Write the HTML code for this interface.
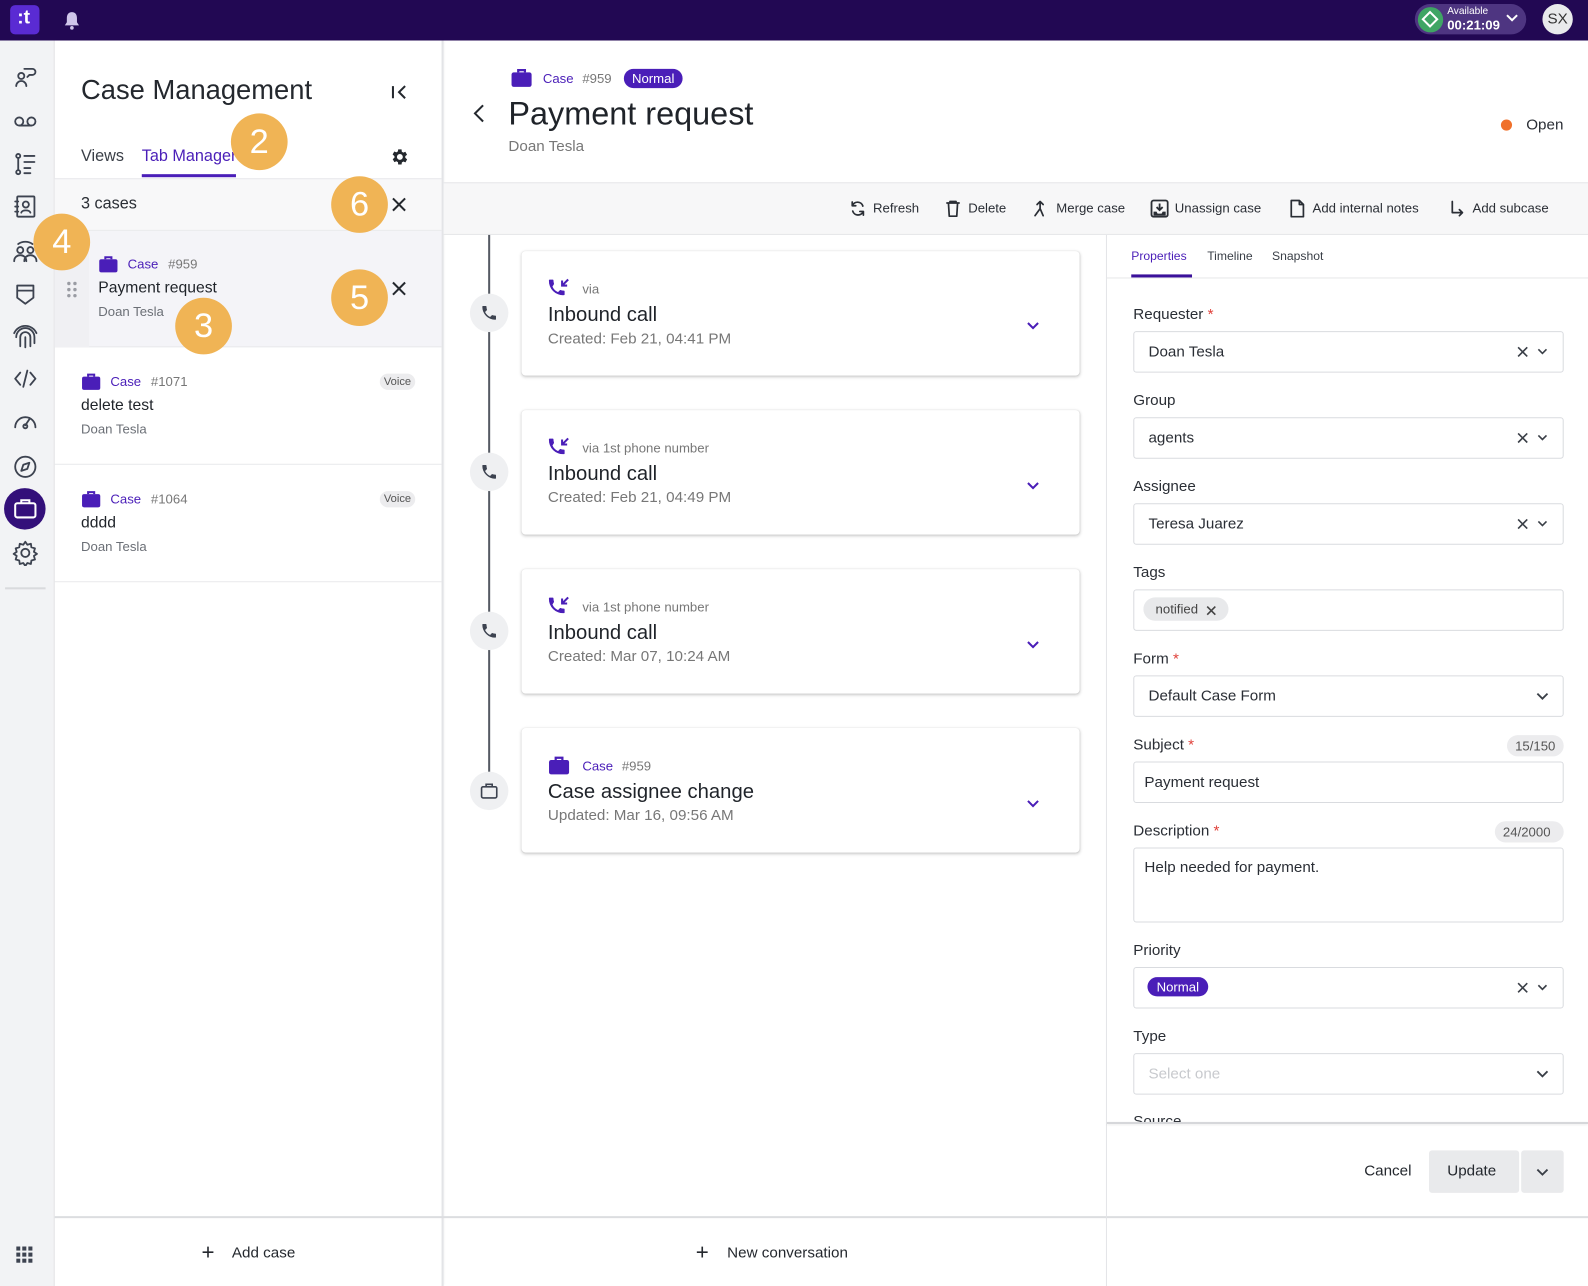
<!DOCTYPE html>
<html><head><meta charset="utf-8">
<style>
*{box-sizing:border-box;margin:0;padding:0}
html,body{width:1588px;height:1286px;overflow:hidden;background:#fff;font-family:"Liberation Sans",sans-serif;color:#1f2329}
#w{position:absolute;left:0;top:0;width:1568px;height:1270px;transform:scale(1.01276,1.0126);transform-origin:0 0;background:#fff}
.a{position:absolute}
.t{position:absolute;white-space:nowrap}
.ic{position:absolute;fill:none;stroke:#3d4350;stroke-width:1.8;stroke-linecap:round;stroke-linejoin:round}
.tb{position:absolute;fill:none;stroke:#2a2e35;stroke-width:1.7;stroke-linecap:round;stroke-linejoin:round}
.badge{position:absolute;width:56px;height:56px;border-radius:50%;background:#f0b455;color:#fff;font-size:34px;text-align:center;line-height:56px}
.card{position:absolute;left:515px;width:551px;height:123px;background:#fff;border-radius:4px;box-shadow:0 1px 3px rgba(0,0,0,.22),0 0 1px rgba(0,0,0,.08)}
.dot{position:absolute;left:464px;width:38px;height:38px;border-radius:50%;background:#eff0f2}
.lbl{position:absolute;left:1119px;font-size:15px;color:#2a2e35}
.req{color:#e0413a}
.inp{position:absolute;left:1119px;width:425px;height:41px;border:1.5px solid #d9dbdf;border-radius:3px;background:#fff}
.inp .v{position:absolute;left:14px;top:11px;font-size:15px;color:#2a2e35}
.cnt{position:absolute;right:24px;font-size:13px;color:#555;background:#ececee;border-radius:12px;padding:3px 8px}
</style></head><body><div id="w">

<!-- top bar -->
<div class="a" style="left:0;top:0;width:1568px;height:40px;background:#220853"></div>
<div class="a" style="left:10px;top:5px;width:29px;height:29px;border-radius:5px;background:#5a2bd3"></div>
<div class="t" style="left:17px;top:7px;color:#fff;font-size:19px;font-weight:bold">:t</div>
<svg class="a" style="left:62px;top:10px" width="18" height="20" viewBox="0 0 18 20"><path d="M9 2c-3.5 0-5 2.5-5 6v4l-2 3h14l-2-3V8c0-3.5-1.5-6-5-6z" fill="#cfc5ea"/><circle cx="9" cy="17.5" r="1.8" fill="#cfc5ea"/></svg>
<div class="a" style="left:1397px;top:4px;width:110px;height:30px;border-radius:15px;background:#4e3581"></div>
<div class="a" style="left:1400px;top:7px;width:25px;height:25px;border-radius:50%;background:#3fa564"></div>
<div class="a" style="left:1406px;top:13px;width:12px;height:12px;border:2px solid #fff;transform:rotate(45deg)"></div>
<div class="t" style="left:1429px;top:6px;color:#fff;font-size:10px">Available</div>
<div class="t" style="left:1429px;top:17px;color:#fff;font-size:13px;font-weight:bold">00:21:09</div>
<svg class="a" style="left:1487px;top:14px" width="12" height="8"><path d="M1 1l5 5 5-5" stroke="#fff" stroke-width="2" fill="none"/></svg>
<div class="a" style="left:1523px;top:4px;width:30px;height:30px;border-radius:50%;background:#e9eaec;color:#333;font-size:15px;text-align:center;line-height:30px">SX</div>

<!-- left rail -->
<div class="a" style="left:0;top:40px;width:54px;height:1230px;background:#f2f3f5;border-right:1px solid #e3e4e7"></div>
<svg class="ic" style="left:13px;top:64px" width="24" height="24" viewBox="0 0 24 24"><circle cx="8" cy="11" r="3"/><path d="M3 21c0-3 2.5-5 5-5s5 2 5 5"/><path d="M11 4h8a3 3 0 013 3v0a3 3 0 01-3 3h-3l-2 2"/></svg>
<svg class="ic" style="left:13px;top:110px" width="24" height="20" viewBox="0 0 24 20"><circle cx="6" cy="10" r="4"/><circle cx="18" cy="10" r="4"/><path d="M6 14h12"/></svg>
<svg class="ic" style="left:13px;top:150px" width="24" height="24" viewBox="0 0 24 24"><circle cx="5" cy="4" r="2"/><circle cx="5" cy="20" r="2"/><path d="M5 6v12M11 4h10M11 10h10M11 16h6M11 21h6"/></svg>
<svg class="ic" style="left:13px;top:192px" width="24" height="24" viewBox="0 0 24 24"><rect x="4" y="2" width="17" height="20" rx="1"/><circle cx="12.5" cy="10" r="3"/><path d="M8 18c1-3 8-3 9 0M2 7h3M2 12h3M2 17h3"/></svg>
<svg class="ic" style="left:12px;top:236px" width="26" height="24" viewBox="0 0 26 24"><circle cx="8" cy="11" r="3"/><circle cx="18" cy="11" r="3"/><path d="M2 22c0-4 3-6 6-6s6 2 6 6M12 22c0-4 3-6 6-6s6 2 6 6M6 5c4-3 10-3 14 0"/></svg>
<svg class="ic" style="left:14px;top:279px" width="22" height="24" viewBox="0 0 22 24"><path d="M3 3h16v12l-8 6-8-6z M3 8h16"/></svg>
<svg class="ic" style="left:12px;top:320px" width="26" height="26" viewBox="0 0 26 26"><path d="M4 13a9 9 0 0118 0v6M8 22v-9a5 5 0 0110 0v9M13 13v10M2 9a12 12 0 0122 0"/></svg>
<svg class="ic" style="left:13px;top:364px" width="24" height="20" viewBox="0 0 24 20"><path d="M7 4l-5 6 5 6M17 4l5 6-5 6M14 2l-4 16"/></svg>
<svg class="ic" style="left:12px;top:404px" width="26" height="22" viewBox="0 0 26 22"><path d="M3 18a10 10 0 0120 0M13 16l4-6"/><circle cx="13" cy="17" r="2"/></svg>
<svg class="ic" style="left:12px;top:448px" width="26" height="26" viewBox="0 0 26 26"><circle cx="13" cy="13" r="10"/><path d="M17 9l-2 6-6 2 2-6z"/></svg>
<div class="a" style="left:4px;top:482px;width:41px;height:41px;border-radius:50%;background:#33107a"></div>
<svg class="a" style="left:13px;top:490px" width="24" height="24" viewBox="0 0 24 24" fill="none" stroke="#fff" stroke-width="2"><rect x="2" y="7" width="20" height="14" rx="2"/><path d="M8 7V4h8v3"/></svg>
<svg class="ic" style="left:12px;top:533px" width="26" height="26" viewBox="0 0 26 26"><circle cx="13" cy="13" r="4"/><path d="M13 2l2 3 3.5-1 .5 3.5 3.5 1-1 3.5 3 2-3 2 1 3.5-3.5 1-.5 3.5-3.5-1-2 3-2-3-3.5 1-.5-3.5-3.5-1 1-3.5-3-2 3-2-1-3.5 3.5-1 .5-3.5 3.5 1z"/></svg>
<div class="a" style="left:5px;top:580px;width:40px;height:2px;background:#d9dadd"></div>
<svg class="a" style="left:16px;top:1231px" width="17" height="17" viewBox="0 0 17 17" fill="#3d4350"><rect x="0" y="0" width="4" height="4"/><rect x="6" y="0" width="4" height="4"/><rect x="12" y="0" width="4" height="4"/><rect x="0" y="6" width="4" height="4"/><rect x="6" y="6" width="4" height="4"/><rect x="12" y="6" width="4" height="4"/><rect x="0" y="12" width="4" height="4"/><rect x="6" y="12" width="4" height="4"/><rect x="12" y="12" width="4" height="4"/></svg>

<!-- left panel -->
<div class="a" style="left:54px;top:40px;width:384px;height:1230px;border-right:2px solid #e3e4e7;box-shadow:1px 0 2px rgba(0,0,0,.06)"></div>
<div class="t" style="left:80px;top:74px;font-size:27px;color:#24282e">Case Management</div>
<svg class="a" style="left:386px;top:83px" width="16" height="16" viewBox="0 0 16 16" fill="none" stroke="#24282e" stroke-width="2"><path d="M2 2v12M14 2L8 8l6 6"/></svg>
<div class="t" style="left:80px;top:146px;font-size:16px;color:#3a3f47">Views</div>
<div class="t" style="left:140px;top:146px;font-size:16px;color:#4a1eb8">Tab Manager</div>
<div class="a" style="left:140px;top:172px;width:93px;height:3px;background:#4a1eb8"></div>
<svg class="a" style="left:384px;top:145px" width="20" height="20" viewBox="0 0 24 24"><path fill="#24282e" d="M19.4 13a7.5 7.5 0 000-2l2.1-1.6-2-3.5-2.5 1a7 7 0 00-1.7-1L15 3h-4l-.4 2.6a7 7 0 00-1.7 1l-2.5-1-2 3.5L6.6 11a7.5 7.5 0 000 2l-2.1 1.6 2 3.5 2.5-1a7 7 0 001.7 1L11 21h4l.4-2.6a7 7 0 001.7-1l2.5 1 2-3.5zM13 15.5a3.5 3.5 0 110-7 3.5 3.5 0 010 7z"/></svg>
<div class="a" style="left:54px;top:176px;width:382px;height:52px;background:#f8f8f9;border-top:1px solid #e8e9eb;border-bottom:1px solid #e8e9eb"></div>
<div class="t" style="left:80px;top:193px;font-size:16px;color:#2a2e35">3 cases</div>
<svg class="a" style="left:387px;top:195px" width="14" height="14" fill="none" stroke="#24282e" stroke-width="2"><path d="M1 1l12 12M13 1L1 13"/></svg>
<div class="a" style="left:54px;top:228px;width:382px;height:115px;background:#f4f4f8;border-bottom:1px solid #e8e9eb"></div>
<div class="a" style="left:54px;top:228px;width:34px;height:115px;background:#f0f0f3"></div>
<svg class="a" style="left:66px;top:278px" width="10" height="16" fill="#9a9ca3"><circle cx="2" cy="2" r="1.7"/><circle cx="8" cy="2" r="1.7"/><circle cx="2" cy="8" r="1.7"/><circle cx="8" cy="8" r="1.7"/><circle cx="2" cy="14" r="1.7"/><circle cx="8" cy="14" r="1.7"/></svg>

<svg class="a" style="left:97px;top:252px" width="20" height="18" viewBox="0 0 20 18"><path d="M7 4V2h6v2" stroke="#4a1eb8" stroke-width="2" fill="none"/><rect x="1" y="4" width="18" height="13" rx="2" fill="#4a1eb8"/></svg>
<div class="t" style="left:126px;top:253px;font-size:13px;color:#4a1eb8">Case</div>
<div class="t" style="left:166px;top:253px;font-size:13px;color:#777">#959</div>
<div class="t" style="left:97px;top:276px;font-size:15.5px;color:#1f2329">Payment request</div>
<div class="t" style="left:97px;top:300px;font-size:13px;color:#6b6f76">Doan Tesla</div>
<svg class="a" style="left:387px;top:278px" width="14" height="14" fill="none" stroke="#24282e" stroke-width="2"><path d="M1 1l12 12M13 1L1 13"/></svg>

<svg class="a" style="left:80px;top:368px" width="20" height="18" viewBox="0 0 20 18"><path d="M7 4V2h6v2" stroke="#4a1eb8" stroke-width="2" fill="none"/><rect x="1" y="4" width="18" height="13" rx="2" fill="#4a1eb8"/></svg>
<div class="t" style="left:109px;top:369px;font-size:13px;color:#4a1eb8">Case</div>
<div class="t" style="left:149px;top:369px;font-size:13px;color:#777">#1071</div>
<div class="t" style="left:375px;top:369px;font-size:11px;color:#555;background:#ececee;border-radius:9px;padding:2px 4px">Voice</div>
<div class="t" style="left:80px;top:392px;font-size:15.5px;color:#1f2329">delete test</div>
<div class="t" style="left:80px;top:416px;font-size:13px;color:#6b6f76">Doan Tesla</div>
<div class="a" style="left:54px;top:458px;width:382px;height:1px;background:#e8e9eb"></div>
<svg class="a" style="left:80px;top:484px" width="20" height="18" viewBox="0 0 20 18"><path d="M7 4V2h6v2" stroke="#4a1eb8" stroke-width="2" fill="none"/><rect x="1" y="4" width="18" height="13" rx="2" fill="#4a1eb8"/></svg>
<div class="t" style="left:109px;top:485px;font-size:13px;color:#4a1eb8">Case</div>
<div class="t" style="left:149px;top:485px;font-size:13px;color:#777">#1064</div>
<div class="t" style="left:375px;top:485px;font-size:11px;color:#555;background:#ececee;border-radius:9px;padding:2px 4px">Voice</div>
<div class="t" style="left:80px;top:508px;font-size:15.5px;color:#1f2329">dddd</div>
<div class="t" style="left:80px;top:532px;font-size:13px;color:#6b6f76">Doan Tesla</div>
<div class="a" style="left:54px;top:574px;width:382px;height:1px;background:#e8e9eb"></div>

<!-- bottom footers -->
<div class="a" style="left:54px;top:1201px;width:1514px;height:2px;background:#dcdde0"></div>
<div class="t" style="left:199px;top:1227px;font-size:22px;color:#24282e;line-height:20px">+</div>
<div class="t" style="left:229px;top:1229px;font-size:15px;color:#24282e">Add case</div>
<div class="t" style="left:687px;top:1227px;font-size:22px;color:#24282e;line-height:20px">+</div>
<div class="t" style="left:718px;top:1229px;font-size:15px;color:#24282e">New conversation</div>

<!-- main header -->
<svg class="a" style="left:504px;top:67px" width="22" height="20" viewBox="0 0 20 18"><path d="M7 4V2h6v2" stroke="#4a1eb8" stroke-width="2" fill="none"/><rect x="1" y="4" width="18" height="13" rx="2" fill="#4a1eb8"/></svg>
<div class="t" style="left:536px;top:70px;font-size:13px;color:#4a1eb8">Case</div>
<div class="t" style="left:575px;top:70px;font-size:13px;color:#777">#959</div>
<div class="t" style="left:616px;top:68px;font-size:13px;color:#fff;background:#4a1eb8;border-radius:10px;padding:2px 8px">Normal</div>
<svg class="a" style="left:467px;top:102px" width="12" height="20" fill="none" stroke="#24282e" stroke-width="2"><path d="M10 2L2 10l8 8"/></svg>
<div class="t" style="left:502px;top:94px;font-size:32px;color:#1f2329">Payment request</div>
<div class="t" style="left:502px;top:136px;font-size:15px;color:#777">Doan Tesla</div>
<div class="a" style="left:1482px;top:118px;width:11px;height:11px;border-radius:50%;background:#f0702a"></div>
<div class="t" style="left:1507px;top:115px;font-size:15px;color:#2a2e35">Open</div>

<!-- toolbar -->
<div class="a" style="left:438px;top:180px;width:1130px;height:52px;background:#f7f7f8;border-top:1px solid #e6e7e9;border-bottom:1px solid #e6e7e9"></div>
<svg class="tb" style="left:838px;top:197px" width="18" height="18" viewBox="0 0 18 18"><path d="M14 6.5A5.5 5.5 0 003.7 6M4 11.5A5.5 5.5 0 0014.3 12M3.5 2.5V6.2H7M14.5 15.5v-3.7H11"/></svg>
<div class="t" style="left:862px;top:198px;font-size:13px;color:#2a2e35">Refresh</div>
<svg class="tb" style="left:933px;top:197px" width="16" height="18" viewBox="0 0 16 18"><path d="M2 3.5h12M5 3.5V2h6v1.5M3.5 3.5l.8 13h7.4l.8-13"/></svg>
<div class="t" style="left:956px;top:198px;font-size:13px;color:#2a2e35">Delete</div>
<svg class="tb" style="left:1019px;top:197px" width="16" height="18" viewBox="0 0 16 18"><path d="M8 2v7l-5 7M8 9l3 7M5 5l3-3 3 3"/></svg>
<div class="t" style="left:1043px;top:198px;font-size:13px;color:#2a2e35">Merge case</div>
<svg class="a" style="left:1136px;top:197px" width="18" height="18" viewBox="0 0 18 18"><rect x="1" y="1" width="16" height="16" rx="2" fill="none" stroke="#2a2e35" stroke-width="1.8"/><path d="M9 4v6M6 7.5l3 3 3-3" stroke="#2a2e35" stroke-width="1.8" fill="none"/><path d="M3 12h3l1 2h4l1-2h3v4H3z" fill="#2a2e35"/></svg>
<div class="t" style="left:1160px;top:198px;font-size:13px;color:#2a2e35">Unassign case</div>
<svg class="tb" style="left:1273px;top:196px" width="16" height="20" viewBox="0 0 16 20"><path d="M2 2h8l4 4v12H2zM10 2v4h4"/></svg>
<div class="t" style="left:1296px;top:198px;font-size:13px;color:#2a2e35">Add internal notes</div>
<svg class="tb" style="left:1431px;top:197px" width="16" height="18" viewBox="0 0 16 18"><path d="M3 2v11h10M10 10l3 3-3 3"/></svg>
<div class="t" style="left:1454px;top:198px;font-size:13px;color:#2a2e35">Add subcase</div>

<!-- timeline -->
<div class="a" style="left:482px;top:232px;width:2px;height:535px;background:#555a63"></div>
<div class="dot" style="top:290px"></div><div class="dot" style="top:447px"></div><div class="dot" style="top:604px"></div><div class="dot" style="top:762px"></div>
<svg class="a" style="left:474px;top:300px" width="18" height="18" viewBox="0 0 24 24"><path fill="#3d4350" d="M6.6 10.8a15 15 0 006.6 6.6l2.2-2.2c.3-.3.7-.4 1-.2 1.1.4 2.3.6 3.6.6.6 0 1 .4 1 1V20c0 .6-.4 1-1 1A17 17 0 013 4c0-.6.4-1 1-1h3.5c.6 0 1 .4 1 1 0 1.3.2 2.5.6 3.6.1.3 0 .7-.2 1z"/></svg>
<svg class="a" style="left:474px;top:457px" width="18" height="18" viewBox="0 0 24 24"><path fill="#3d4350" d="M6.6 10.8a15 15 0 006.6 6.6l2.2-2.2c.3-.3.7-.4 1-.2 1.1.4 2.3.6 3.6.6.6 0 1 .4 1 1V20c0 .6-.4 1-1 1A17 17 0 013 4c0-.6.4-1 1-1h3.5c.6 0 1 .4 1 1 0 1.3.2 2.5.6 3.6.1.3 0 .7-.2 1z"/></svg>
<svg class="a" style="left:474px;top:614px" width="18" height="18" viewBox="0 0 24 24"><path fill="#3d4350" d="M6.6 10.8a15 15 0 006.6 6.6l2.2-2.2c.3-.3.7-.4 1-.2 1.1.4 2.3.6 3.6.6.6 0 1 .4 1 1V20c0 .6-.4 1-1 1A17 17 0 013 4c0-.6.4-1 1-1h3.5c.6 0 1 .4 1 1 0 1.3.2 2.5.6 3.6.1.3 0 .7-.2 1z"/></svg>
<svg class="a" style="left:474px;top:772px" width="18" height="18" viewBox="0 0 18 18" fill="none" stroke="#3d4350" stroke-width="1.6"><rect x="1.5" y="5" width="15" height="11" rx="1.5"/><path d="M6 5V2.5h6V5"/></svg>

<div class="card" style="top:248px"></div>
<div class="card" style="top:405px"></div>
<div class="card" style="top:562px"></div>
<div class="card" style="top:719px"></div>

<svg class="a" style="left:541px;top:275px" width="24" height="20" viewBox="0 0 24 20"><path fill="#4a1eb8" d="M4.5 8a11 11 0 005.5 5.5l1.8-1.8c.3-.3.6-.3.9-.2a10 10 0 003 .5c.5 0 .8.3.8.8v2.9c0 .5-.3.8-.8.8A14 14 0 011 2c0-.5.3-.8.8-.8h2.9c.5 0 .8.3.8.8 0 1 .2 2 .5 3 .1.3 0 .6-.2.9z"/><path d="M20 1l-6 6M14 2v5h5" stroke="#4a1eb8" stroke-width="2" fill="none"/></svg>
<div class="t" style="left:575px;top:278px;font-size:13px;color:#777">via</div>
<div class="t" style="left:541px;top:300px;font-size:20px;color:#1f2329">Inbound call</div>
<div class="t" style="left:541px;top:326px;font-size:15px;color:#777">Created: Feb 21, 04:41 PM</div>

<svg class="a" style="left:541px;top:432px" width="24" height="20" viewBox="0 0 24 20"><path fill="#4a1eb8" d="M4.5 8a11 11 0 005.5 5.5l1.8-1.8c.3-.3.6-.3.9-.2a10 10 0 003 .5c.5 0 .8.3.8.8v2.9c0 .5-.3.8-.8.8A14 14 0 011 2c0-.5.3-.8.8-.8h2.9c.5 0 .8.3.8.8 0 1 .2 2 .5 3 .1.3 0 .6-.2.9z"/><path d="M20 1l-6 6M14 2v5h5" stroke="#4a1eb8" stroke-width="2" fill="none"/></svg>
<div class="t" style="left:575px;top:435px;font-size:13px;color:#777">via 1st phone number</div>
<div class="t" style="left:541px;top:457px;font-size:20px;color:#1f2329">Inbound call</div>
<div class="t" style="left:541px;top:483px;font-size:15px;color:#777">Created: Feb 21, 04:49 PM</div>

<svg class="a" style="left:541px;top:589px" width="24" height="20" viewBox="0 0 24 20"><path fill="#4a1eb8" d="M4.5 8a11 11 0 005.5 5.5l1.8-1.8c.3-.3.6-.3.9-.2a10 10 0 003 .5c.5 0 .8.3.8.8v2.9c0 .5-.3.8-.8.8A14 14 0 011 2c0-.5.3-.8.8-.8h2.9c.5 0 .8.3.8.8 0 1 .2 2 .5 3 .1.3 0 .6-.2.9z"/><path d="M20 1l-6 6M14 2v5h5" stroke="#4a1eb8" stroke-width="2" fill="none"/></svg>
<div class="t" style="left:575px;top:592px;font-size:13px;color:#777">via 1st phone number</div>
<div class="t" style="left:541px;top:614px;font-size:20px;color:#1f2329">Inbound call</div>
<div class="t" style="left:541px;top:640px;font-size:15px;color:#777">Created: Mar 07, 10:24 AM</div>

<svg class="a" style="left:541px;top:746px" width="22" height="20" viewBox="0 0 20 18"><path d="M7 4V2h6v2" stroke="#4a1eb8" stroke-width="2" fill="none"/><rect x="1" y="4" width="18" height="13" rx="2" fill="#4a1eb8"/></svg>
<div class="t" style="left:575px;top:749px;font-size:13px;color:#4a1eb8">Case</div>
<div class="t" style="left:614px;top:749px;font-size:13px;color:#777">#959</div>
<div class="t" style="left:541px;top:771px;font-size:20px;color:#1f2329">Case assignee change</div>
<div class="t" style="left:541px;top:797px;font-size:15px;color:#777">Updated: Mar 16, 09:56 AM</div>

<svg class="a" style="left:1014px;top:318px" width="12" height="8" fill="none" stroke="#4a1eb8" stroke-width="2"><path d="M1 1l5 5 5-5"/></svg>
<svg class="a" style="left:1014px;top:476px" width="12" height="8" fill="none" stroke="#4a1eb8" stroke-width="2"><path d="M1 1l5 5 5-5"/></svg>
<svg class="a" style="left:1014px;top:633px" width="12" height="8" fill="none" stroke="#4a1eb8" stroke-width="2"><path d="M1 1l5 5 5-5"/></svg>
<svg class="a" style="left:1014px;top:790px" width="12" height="8" fill="none" stroke="#4a1eb8" stroke-width="2"><path d="M1 1l5 5 5-5"/></svg>

<!-- right panel -->
<div class="a" style="left:1092px;top:232px;width:1px;height:1038px;background:#e3e4e7"></div>
<div class="t" style="left:1117px;top:246px;font-size:12px;color:#4a1eb8">Properties</div>
<div class="t" style="left:1192px;top:246px;font-size:12px;color:#3a3f47">Timeline</div>
<div class="t" style="left:1256px;top:246px;font-size:12px;color:#3a3f47">Snapshot</div>
<div class="a" style="left:1093px;top:274px;width:475px;height:1px;background:#e6e7e9"></div>
<div class="a" style="left:1117px;top:271px;width:60px;height:3px;background:#3a119a"></div>

<div class="lbl" style="top:302px">Requester <span class="req">*</span></div>
<div class="inp" style="top:327px"><span class="v">Doan Tesla</span></div>
<div class="lbl" style="top:387px">Group</div>
<div class="inp" style="top:412px"><span class="v">agents</span></div>
<div class="lbl" style="top:472px">Assignee</div>
<div class="inp" style="top:497px"><span class="v">Teresa Juarez</span></div>
<div class="lbl" style="top:557px">Tags</div>
<div class="inp" style="top:582px"><span class="t" style="left:9px;top:7px;font-size:13px;color:#444;background:#e8e9eb;border-radius:12px;padding:4px 30px 4px 12px">notified</span><svg class="a" style="left:71px;top:15px" width="10" height="10" fill="none" stroke="#444" stroke-width="1.6"><path d="M1 1l8 8M9 1L1 9"/></svg></div>
<div class="lbl" style="top:642px">Form <span class="req">*</span></div>
<div class="inp" style="top:667px"><span class="v">Default Case Form</span></div>
<div class="lbl" style="top:727px">Subject <span class="req">*</span></div>
<div class="cnt" style="top:726px;left:1488px">15/150</div>
<div class="inp" style="top:752px"><span class="v" style="left:10px">Payment request</span></div>
<div class="lbl" style="top:812px">Description <span class="req">*</span></div>
<div class="cnt" style="top:811px;left:1476px">24/2000</div>
<div class="inp" style="top:837px;height:74px"><span class="v" style="left:10px;top:10px">Help needed for payment.</span></div>
<div class="lbl" style="top:930px">Priority</div>
<div class="inp" style="top:955px"><span class="t" style="left:13px;top:9px;font-size:13px;color:#fff;background:#4a1eb8;border-radius:11px;padding:2px 9px">Normal</span></div>
<div class="lbl" style="top:1015px">Type</div>
<div class="inp" style="top:1040px"><span class="v" style="color:#c8cace">Select one</span></div>
<div class="lbl" style="top:1099px;height:10px;overflow:hidden">Source</div>
<div class="a" style="left:1093px;top:1108px;width:475px;height:2px;background:#d6d7da;box-shadow:0 1px 2px rgba(0,0,0,.08)"></div>

<!-- select icons -->
<svg class="a" style="left:1497px;top:342px" width="34" height="12" fill="none" stroke="#3a3f47" stroke-width="1.6"><path d="M2 1l9 9M11 1l-9 9M22 3l4 4 4-4"/></svg>
<svg class="a" style="left:1497px;top:427px" width="34" height="12" fill="none" stroke="#3a3f47" stroke-width="1.6"><path d="M2 1l9 9M11 1l-9 9M22 3l4 4 4-4"/></svg>
<svg class="a" style="left:1497px;top:512px" width="34" height="12" fill="none" stroke="#3a3f47" stroke-width="1.6"><path d="M2 1l9 9M11 1l-9 9M22 3l4 4 4-4"/></svg>
<svg class="a" style="left:1497px;top:970px" width="34" height="12" fill="none" stroke="#3a3f47" stroke-width="1.6"><path d="M2 1l9 9M11 1l-9 9M22 3l4 4 4-4"/></svg>
<svg class="a" style="left:1517px;top:684px" width="12" height="8" fill="none" stroke="#3a3f47" stroke-width="1.8"><path d="M1 1l5 5 5-5"/></svg>
<svg class="a" style="left:1517px;top:1057px" width="12" height="8" fill="none" stroke="#3a3f47" stroke-width="1.8"><path d="M1 1l5 5 5-5"/></svg>

<div class="t" style="left:1347px;top:1148px;font-size:15px;color:#24282e">Cancel</div>
<div class="a" style="left:1411px;top:1136px;width:89px;height:42px;background:#e9eaec;border-radius:3px"></div>
<div class="t" style="left:1429px;top:1148px;font-size:15px;color:#24282e">Update</div>
<div class="a" style="left:1502px;top:1136px;width:42px;height:42px;background:#e9eaec;border-radius:3px"></div>
<svg class="a" style="left:1517px;top:1154px" width="12" height="8" fill="none" stroke="#3a3f47" stroke-width="1.8"><path d="M1 1l5 5 5-5"/></svg>

<!-- orange badges -->
<div class="badge" style="left:228px;top:112px">2</div>
<div class="badge" style="left:327px;top:174px">6</div>
<div class="badge" style="left:33px;top:211px">4</div>
<div class="badge" style="left:327px;top:266px">5</div>
<div class="badge" style="left:173px;top:294px">3</div>

</div></body></html>
